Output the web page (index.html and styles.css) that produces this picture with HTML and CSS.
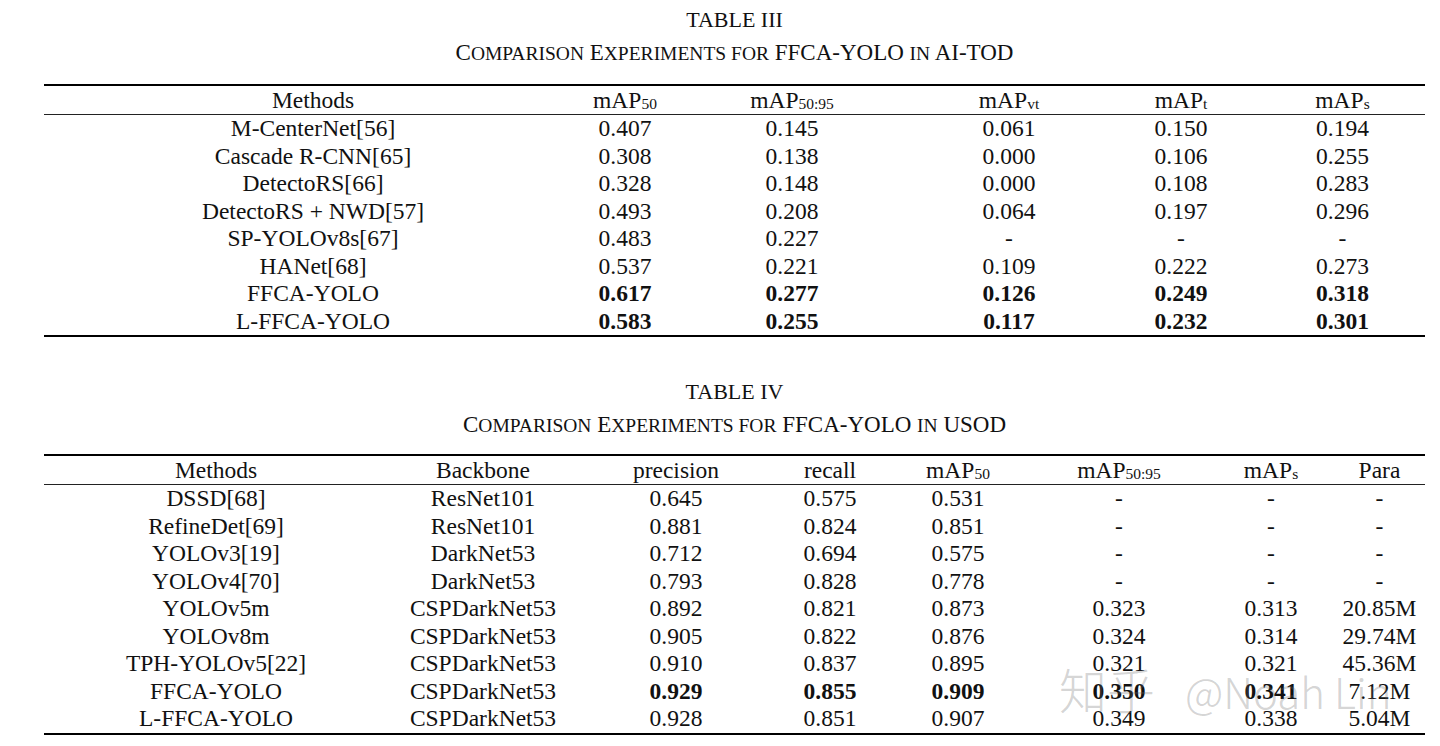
FILE: index.html
```html
<!DOCTYPE html>
<html>
<head>
<meta charset="utf-8">
<link rel="stylesheet" href="styles.css">
</head>
<body>
<div class="page">
  <section class="block first">
    <div class="cap">TABLE III</div>
    <div class="cap sub-title">C<span class="sc">omparison</span> E<span class="sc">xperiments for</span> FFCA-YOLO <span class="sc">in</span> AI-TOD</div>
    <table class="tbl t3">
      <colgroup>
        <col style="width:538px"><col style="width:86px"><col style="width:248px"><col style="width:186px"><col style="width:158px"><col style="width:165px">
      </colgroup>
      <thead>
        <tr><th>Methods</th><th>mAP<span class="sub">50</span></th><th>mAP<span class="sub">50:95</span></th><th>mAP<span class="sub">vt</span></th><th>mAP<span class="sub">t</span></th><th>mAP<span class="sub">s</span></th></tr>
      </thead>
      <tbody>
        <tr><td>M-CenterNet[56]</td><td>0.407</td><td>0.145</td><td>0.061</td><td>0.150</td><td>0.194</td></tr>
        <tr><td>Cascade R-CNN[65]</td><td>0.308</td><td>0.138</td><td>0.000</td><td>0.106</td><td>0.255</td></tr>
        <tr><td>DetectoRS[66]</td><td>0.328</td><td>0.148</td><td>0.000</td><td>0.108</td><td>0.283</td></tr>
        <tr><td>DetectoRS + NWD[57]</td><td>0.493</td><td>0.208</td><td>0.064</td><td>0.197</td><td>0.296</td></tr>
        <tr><td>SP-YOLOv8s[67]</td><td>0.483</td><td>0.227</td><td>-</td><td>-</td><td>-</td></tr>
        <tr><td>HANet[68]</td><td>0.537</td><td>0.221</td><td>0.109</td><td>0.222</td><td>0.273</td></tr>
        <tr><td>FFCA-YOLO</td><td class="b">0.617</td><td class="b">0.277</td><td class="b">0.126</td><td class="b">0.249</td><td class="b">0.318</td></tr>
        <tr><td>L-FFCA-YOLO</td><td class="b">0.583</td><td class="b">0.255</td><td class="b">0.117</td><td class="b">0.232</td><td class="b">0.301</td></tr>
      </tbody>
    </table>
  </section>

  <section class="block second">
    <div class="cap">TABLE IV</div>
    <div class="cap sub-title">C<span class="sc">omparison</span> E<span class="sc">xperiments for</span> FFCA-YOLO <span class="sc">in</span> USOD</div>
    <table class="tbl t4">
      <colgroup>
        <col style="width:344px"><col style="width:190px"><col style="width:196px"><col style="width:112px"><col style="width:144px"><col style="width:178px"><col style="width:126px"><col style="width:91px">
      </colgroup>
      <thead>
        <tr><th>Methods</th><th>Backbone</th><th>precision</th><th>recall</th><th>mAP<span class="sub">50</span></th><th>mAP<span class="sub">50:95</span></th><th>mAP<span class="sub">s</span></th><th>Para</th></tr>
      </thead>
      <tbody>
        <tr><td>DSSD[68]</td><td>ResNet101</td><td>0.645</td><td>0.575</td><td>0.531</td><td>-</td><td>-</td><td>-</td></tr>
        <tr><td>RefineDet[69]</td><td>ResNet101</td><td>0.881</td><td>0.824</td><td>0.851</td><td>-</td><td>-</td><td>-</td></tr>
        <tr><td>YOLOv3[19]</td><td>DarkNet53</td><td>0.712</td><td>0.694</td><td>0.575</td><td>-</td><td>-</td><td>-</td></tr>
        <tr><td>YOLOv4[70]</td><td>DarkNet53</td><td>0.793</td><td>0.828</td><td>0.778</td><td>-</td><td>-</td><td>-</td></tr>
        <tr><td>YOLOv5m</td><td>CSPDarkNet53</td><td>0.892</td><td>0.821</td><td>0.873</td><td>0.323</td><td>0.313</td><td>20.85M</td></tr>
        <tr><td>YOLOv8m</td><td>CSPDarkNet53</td><td>0.905</td><td>0.822</td><td>0.876</td><td>0.324</td><td>0.314</td><td>29.74M</td></tr>
        <tr><td>TPH-YOLOv5[22]</td><td>CSPDarkNet53</td><td>0.910</td><td>0.837</td><td>0.895</td><td>0.321</td><td>0.321</td><td>45.36M</td></tr>
        <tr><td>FFCA-YOLO</td><td>CSPDarkNet53</td><td class="b">0.929</td><td class="b">0.855</td><td class="b">0.909</td><td class="b">0.350</td><td class="b">0.341</td><td>7.12M</td></tr>
        <tr><td>L-FFCA-YOLO</td><td>CSPDarkNet53</td><td>0.928</td><td>0.851</td><td>0.907</td><td>0.349</td><td>0.338</td><td>5.04M</td></tr>
      </tbody>
    </table>
  </section>

  <div class="watermark"><span class="wm-cjk">知乎</span><span class="wm-lat">@Noah Lin</span></div>
</div>
</body>
</html>
```

FILE: styles.css
```css
html, body {
  margin: 0;
  padding: 0;
  background: #ffffff;
}

.page {
  position: relative;
  width: 1440px;
  height: 746px;
  overflow: hidden;
  font-family: "Liberation Serif", "Times New Roman", serif;
  color: #111;
}

.block {
  display: flex;
  flex-direction: column;
  align-items: center;
  width: 1381px;
  margin-left: 44px;
}

.block.first {
  padding-top: 3px;
}

.block.second {
  padding-top: 38px;
}

.cap {
  font-size: 22px;
  line-height: 33px;
  height: 33px;
  text-align: center;
  white-space: nowrap;
}

.cap.sub-title {
  font-size: 23px;
}

.sc {
  text-transform: uppercase;
  font-size: 19.5px;
}

.tbl {
  margin-top: 15px;
  width: 1381px;
  table-layout: fixed;
  border-collapse: collapse;
  font-size: 23.5px;
  border-top: 2px solid #000;
  border-bottom: 2px solid #000;
}

.t4 {
  margin-top: 13px;
}

.tbl th,
.tbl td {
  padding: 0;
  text-align: center;
  white-space: nowrap;
  font-weight: normal;
}

.tbl thead tr {
  border-bottom: 1px solid #222;
}

.tbl th {
  height: 28px;
  line-height: 28px;
}

.t3 td,
.t4 td {
  height: 27.5px;
  line-height: 27.5px;
}

.tbl td.b {
  font-weight: bold;
}

.sub {
  font-size: 0.66em;
  line-height: 0;
  vertical-align: -1px;
}

.watermark {
  position: absolute;
  left: 1059px;
  top: 658px;
  display: flex;
  align-items: baseline;
  gap: 30px;
  font-family: "Noto Sans CJK SC", "Noto Sans", sans-serif;
  font-weight: 300;
  line-height: 60px;
  color: rgba(110, 110, 110, 0.3);
  white-space: nowrap;
}

.wm-cjk {
  font-size: 48px;
}

.wm-lat {
  font-size: 42px;
}
```
